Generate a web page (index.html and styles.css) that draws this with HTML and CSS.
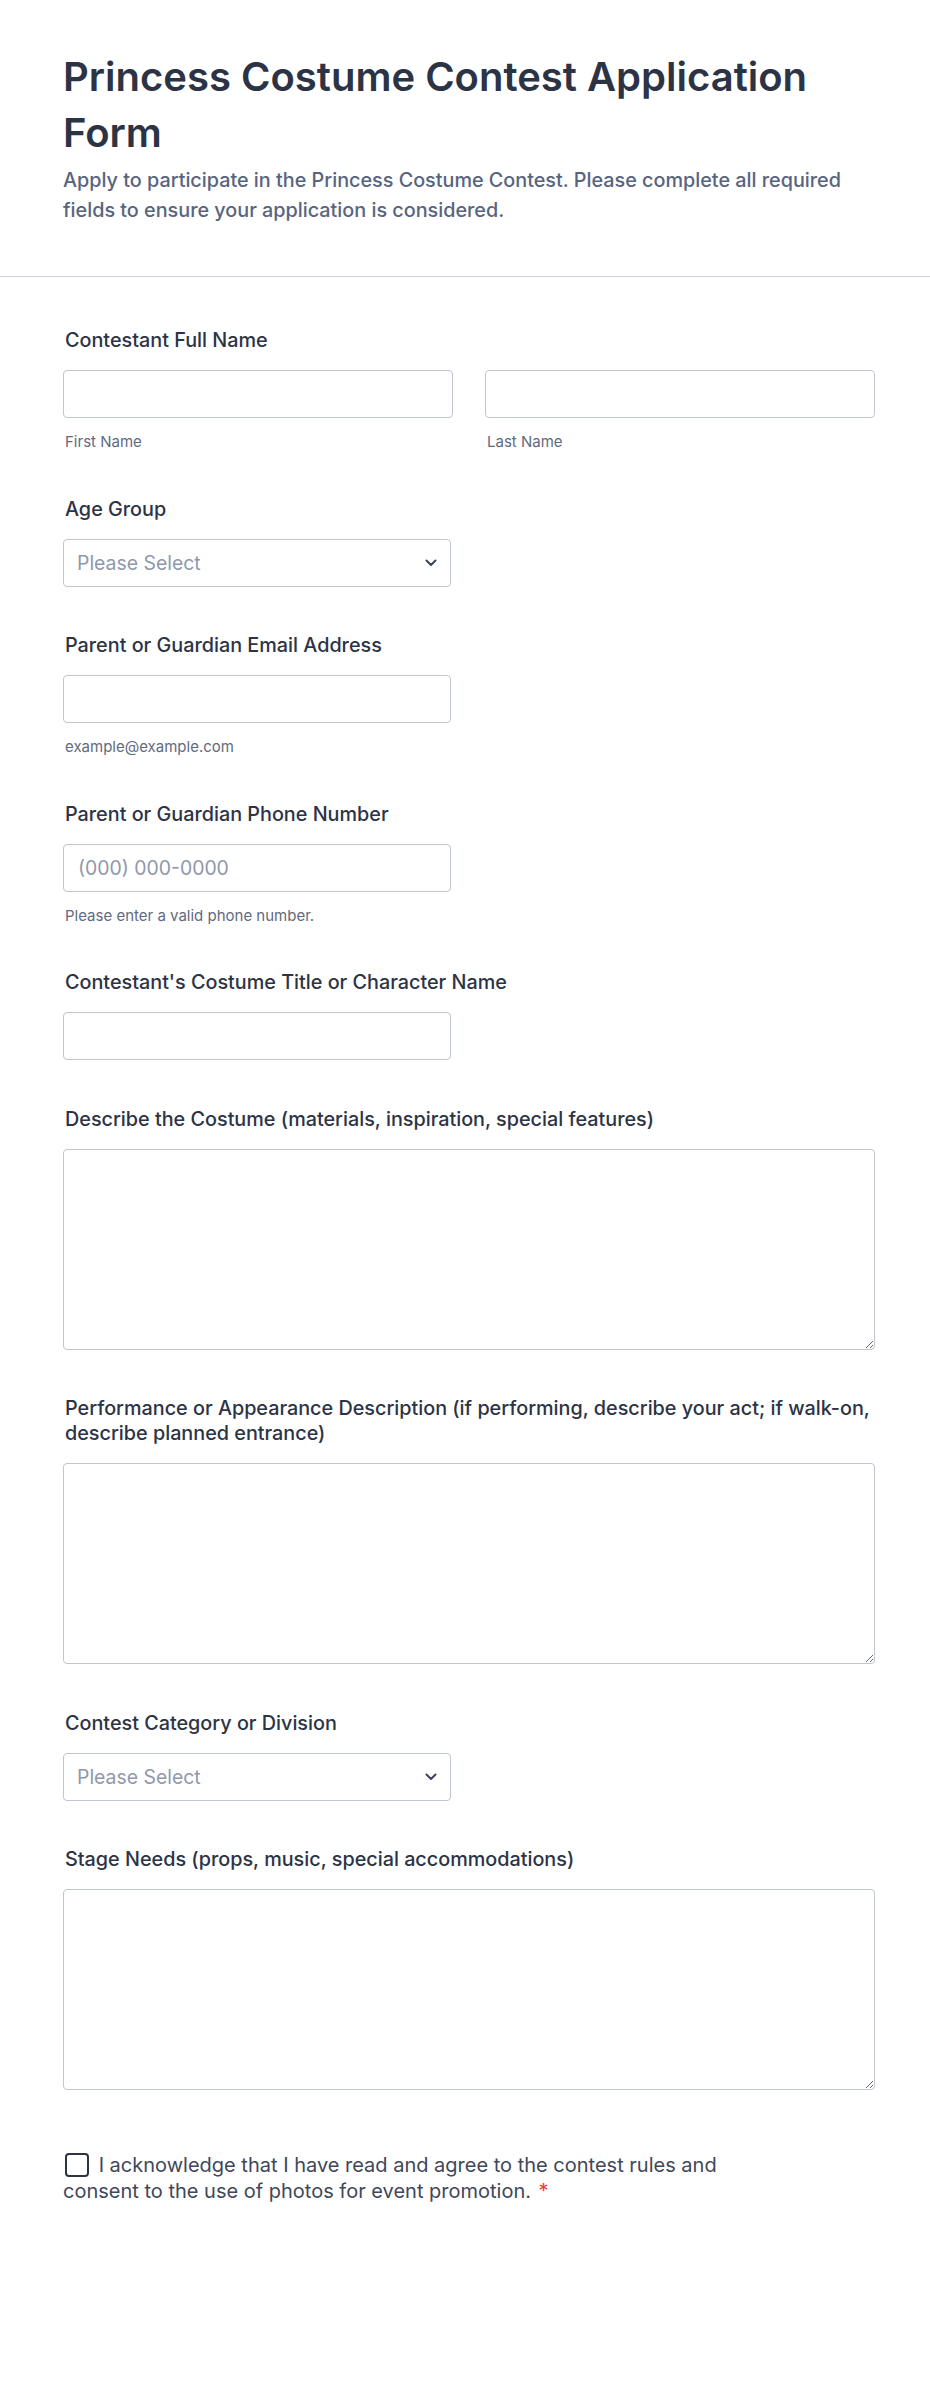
FILE: index.html
```html
<!DOCTYPE html>
<html lang="en">
<head>
<meta charset="utf-8">
<title>Princess Costume Contest Application Form</title>
<link rel="stylesheet" href="styles.css">
</head>
<body>
<div class="page">
  <header class="form-header">
    <h1 class="form-title">Princess Costume Contest Application Form</h1>
    <p class="form-subtitle">Apply to participate in the Princess Costume Contest. Please complete all required fields to ensure your application is considered.</p>
  </header>

  <form class="form-body">
    <div class="field">
      <label class="field-label">Contestant Full Name</label>
      <div class="name-row">
        <div class="name-col">
          <input class="text-input" type="text">
          <span class="sublabel">First Name</span>
        </div>
        <div class="name-col">
          <input class="text-input" type="text">
          <span class="sublabel">Last Name</span>
        </div>
      </div>
    </div>

    <div class="field">
      <label class="field-label">Age Group</label>
      <div class="select-box half">
        <span class="select-placeholder">Please Select</span>
        <svg class="chevron" width="12" height="8" viewBox="0 0 12 8"><path d="M1.5 1.5 L6 6 L10.5 1.5" fill="none" stroke="#3b4459" stroke-width="2" stroke-linecap="round" stroke-linejoin="round"/></svg>
      </div>
    </div>

    <div class="field">
      <label class="field-label">Parent or Guardian Email Address</label>
      <input class="text-input half" type="email">
      <span class="sublabel">example@example.com</span>
    </div>

    <div class="field">
      <label class="field-label">Parent or Guardian Phone Number</label>
      <input class="text-input half" type="tel" placeholder="(000) 000-0000">
      <span class="sublabel">Please enter a valid phone number.</span>
    </div>

    <div class="field">
      <label class="field-label">Contestant's Costume Title or Character Name</label>
      <input class="text-input half" type="text">
    </div>

    <div class="field">
      <label class="field-label">Describe the Costume (materials, inspiration, special features)</label>
      <textarea class="text-area"></textarea>
    </div>

    <div class="field">
      <label class="field-label">Performance or Appearance Description (if performing, describe your act; if walk-on, describe planned entrance)</label>
      <textarea class="text-area"></textarea>
    </div>

    <div class="field">
      <label class="field-label">Contest Category or Division</label>
      <div class="select-box half">
        <span class="select-placeholder">Please Select</span>
        <svg class="chevron" width="12" height="8" viewBox="0 0 12 8"><path d="M1.5 1.5 L6 6 L10.5 1.5" fill="none" stroke="#3b4459" stroke-width="2" stroke-linecap="round" stroke-linejoin="round"/></svg>
      </div>
    </div>

    <div class="field">
      <label class="field-label">Stage Needs (props, music, special accommodations)</label>
      <textarea class="text-area"></textarea>
    </div>

    <div class="consent">
      <p class="consent-text"><span class="checkbox"></span> I acknowledge that I have read and agree to the contest rules and consent to the use of photos for event promotion. <span class="required">*</span></p>
    </div>
  </form>
</div>
</body>
</html>
```

FILE: styles.css
```css
* { box-sizing: border-box; }

html, body {
  margin: 0;
  padding: 0;
  background: #ffffff;
}

body {
  font-family: Inter, "Noto Sans", "Liberation Sans", sans-serif;
  color: #2c3345;
}

.page {
  width: 930px;
  min-height: 2408px;
}

.form-header {
  padding: 49px 55px 51px 63px;
  border-bottom: 1px solid #d3d6e0;
}

.form-title {
  margin: 0;
  font-size: 40px;
  line-height: 56px;
  font-weight: 600;
  color: #2c3345;
}

.form-subtitle {
  margin: 4px 0 0;
  font-size: 19.8px;
  line-height: 30px;
  font-weight: 500;
  color: #57647e;
}

.form-body {
  padding: 51px 55px 60px 63px;
  display: flex;
  flex-direction: column;
}

.field {
  display: flex;
  flex-direction: column;
  align-items: flex-start;
  margin-bottom: 46.5px;
}

.field-label {
  display: block;
  font-size: 19.8px;
  line-height: 25px;
  font-weight: 500;
  color: #2c3345;
  padding-left: 2px;
  margin-bottom: 17px;
}

.name-row {
  display: grid;
  grid-template-columns: 390px 390px;
  column-gap: 32px;
  width: 812px;
}

.name-col {
  display: flex;
  flex-direction: column;
}

.text-input {
  display: block;
  width: 100%;
  height: 48px;
  border: 1px solid #bfc5d3;
  border-radius: 4px;
  background: #fff;
  padding: 0 14px;
  font-family: inherit;
  font-size: 19.4px;
  color: #2c3345;
  margin: 0;
}

.text-input.half {
  width: 388px;
}

.text-input::placeholder {
  color: #8f98ab;
}

.sublabel {
  display: block;
  margin-top: 16px;
  font-size: 15px;
  line-height: 16px;
  color: #5f6a80;
  padding-left: 2px;
}

.select-box {
  display: flex;
  align-items: center;
  justify-content: space-between;
  height: 48px;
  border: 1px solid #bfc5d3;
  border-radius: 4px;
  padding: 0 13px 0 13px;
  background: #fff;
}

.select-box.half {
  width: 388px;
}

.select-placeholder {
  font-size: 19.4px;
  color: #8f98ab;
}

.chevron {
  display: block;
}

.text-area {
  display: block;
  width: 812px;
  height: 201px;
  border: 1px solid #bfc5d3;
  border-radius: 4px;
  background: #fff;
  font-family: inherit;
  font-size: 16px;
  padding: 10px 14px;
  margin: 0;
  resize: both;
}

.consent {
  padding-top: 15px;
  width: 690px;
}

.consent-text {
  margin: 0;
  font-size: 20px;
  line-height: 26px;
  color: #3f475a;
}

.checkbox {
  display: inline-block;
  width: 24px;
  height: 24px;
  border: 2px solid #2c3345;
  border-radius: 4px;
  vertical-align: -5px;
  margin-left: 2px;
  margin-right: 4px;
  background: #fff;
}

.required {
  color: #f23a3c;
  margin-left: 2px;
}
```
